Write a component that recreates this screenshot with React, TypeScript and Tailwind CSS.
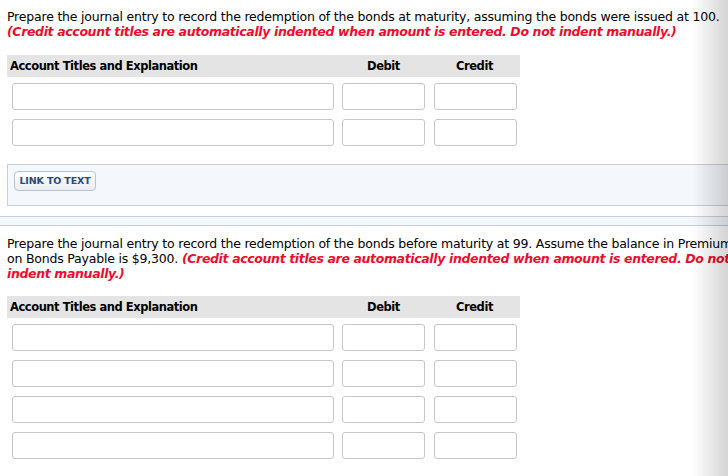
import React from "react";

const font = { fontFamily: '"DejaVu Sans", Verdana, sans-serif' };

function Input({ w }: { w: string }) {
  return <div className={`${w} h-[27px] rounded-[3px] border border-[#c6c6c6] bg-white shrink-0`} />;
}

function Table({ rows }: { rows: number }) {
  return (
    <div className="w-[513px] ml-[7px]">
      <div className="grid grid-cols-[331px_91px_91px] h-[22px] items-center bg-[#e4e4e4] text-[11.5px] tracking-[-0.45px] font-bold text-black pt-[1px]">
        <div className="pl-[3px]">Account Titles and Explanation</div>
        <div className="text-center">Debit</div>
        <div className="text-center">Credit</div>
      </div>
      <div className="flex flex-col gap-[9px] mt-[6px]">
        {Array.from({ length: rows }).map((_, i) => (
          <div key={i} className="flex pl-[5px]">
            <Input w="w-[322px]" />
            <div className="w-[8px]" />
            <Input w="w-[83px]" />
            <div className="w-[9px]" />
            <Input w="w-[83px]" />
          </div>
        ))}
      </div>
    </div>
  );
}

const red = "text-[#ec0c2e] font-bold italic tracking-[-0.36px]";

export default function App() {
  return (
    <div className="relative w-[728px] h-[476px] overflow-hidden bg-white text-black" style={font}>
      <div className="w-[800px]">
        <div className="pt-[9px] pl-[7px] text-[12.5px] tracking-[-0.2px] leading-[15px] whitespace-nowrap">
          <div>Prepare the journal entry to record the redemption of the bonds at maturity, assuming the bonds were issued at 100.</div>
          <div className={red}>(Credit account titles are automatically indented when amount is entered. Do not indent manually.)</div>
        </div>
        <div className="mt-[16px]">
          <Table rows={2} />
        </div>
        <div className="mt-[18px] ml-[7px] h-[42px] border border-[#c9cfd8] bg-[#f4f7fb] pt-[6px] pl-[6px] flex items-start">
          <button className="block h-[20px] w-[82px] rounded-[4px] border border-[#b9c3d0] bg-gradient-to-b from-white to-[#e9edf2] text-[9.5px] tracking-[-0.15px] font-bold text-[#2b4a75] leading-none" style={font}>
            LINK TO TEXT
          </button>
        </div>
        <div className="mt-[10px] h-[10px] border-y border-[#c9cfd8] bg-[#f4f7fb]" />
        <div className="pt-[10px] pl-[7px] text-[12.5px] tracking-[-0.2px] leading-[15px] whitespace-nowrap">
          <div>Prepare the journal entry to record the redemption of the bonds before maturity at 99. Assume the balance in Premium</div>
          <div>
            on Bonds Payable is $9,300.{" "}
            <span className={red}>(Credit account titles are automatically indented when amount is entered. Do not</span>
          </div>
          <div className={red}>indent manually.)</div>
        </div>
        <div className="mt-[15px]">
          <Table rows={4} />
        </div>
      </div>
      <div className="pointer-events-none absolute right-0 top-0 h-full w-[36px] bg-gradient-to-r from-[rgba(0,0,0,0)] to-[rgba(0,0,0,0.17)]" />
    </div>
  );
}
